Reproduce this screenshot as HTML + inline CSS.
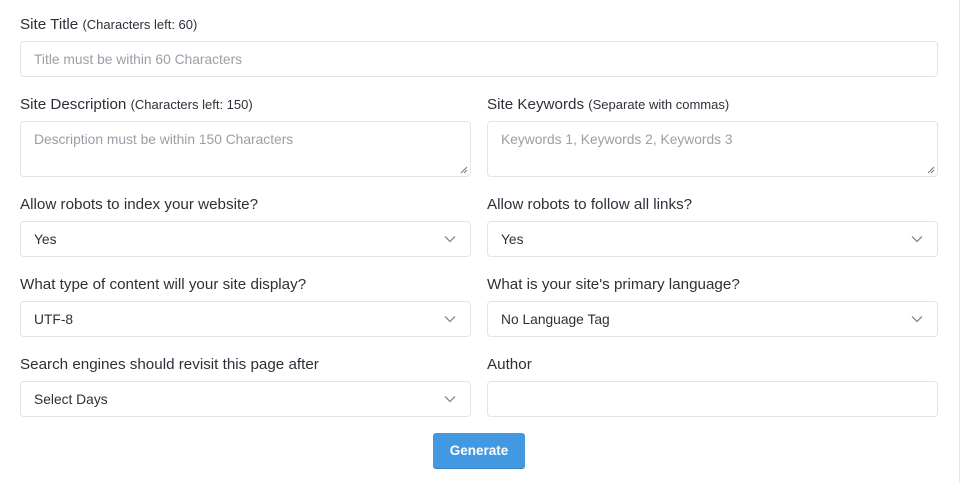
<!DOCTYPE html>
<html><head><meta charset="utf-8"><style>
*{box-sizing:border-box;margin:0;padding:0}
body{width:963px;height:483px;background:#fff;font-family:"Liberation Sans",sans-serif;color:#2d3039;position:relative;overflow:hidden}
.lbl{position:absolute;font-size:15.2px;line-height:16px;margin-top:2px}
.lbl small{font-size:13px}
.box{position:absolute;border:1px solid #e2e4e8;border-radius:4px;background:#fff;font-size:13.8px;color:#2d3039;padding-left:13px;display:flex;align-items:center}
.ph{color:#9a9ea6}
.ta{align-items:flex-start;padding-top:10px}
.arr{position:absolute;right:14px;top:13px;width:12px;height:8px}
.grip{position:absolute;right:2px;bottom:2px;width:8px;height:8px}
.btn{position:absolute;left:433px;top:433px;width:92px;height:35px;background:#4299e1;border-radius:3px;color:#fff;font-size:13.5px;font-weight:bold;display:flex;align-items:center;justify-content:center;box-shadow:0 1px 0 #3a86c8}
.vl{position:absolute;left:959px;top:0;width:1px;height:483px;background:#e6e6e6}
</style></head><body>
<div class="lbl" style="left:20px;top:15px">Site Title <small>(Characters left: 60)</small></div>
<div class="box" style="left:20px;top:41px;width:918px;height:36px"><span class="ph">Title must be within 60 Characters</span></div>

<div class="lbl" style="left:20px;top:95px">Site Description <small>(Characters left: 150)</small></div>
<div class="box ta" style="left:20px;top:121px;width:451px;height:56px"><span class="ph">Description must be within 150 Characters</span><svg class="grip" viewBox="0 0 8 8"><path d="M7 1L1 7M7 4L4 7" stroke="#777" stroke-width="1"/></svg></div>
<div class="lbl" style="left:487px;top:95px">Site Keywords <small>(Separate with commas)</small></div>
<div class="box ta" style="left:487px;top:121px;width:451px;height:56px"><span class="ph">Keywords 1, Keywords 2, Keywords 3</span><svg class="grip" viewBox="0 0 8 8"><path d="M7 1L1 7M7 4L4 7" stroke="#777" stroke-width="1"/></svg></div>

<div class="lbl" style="left:20px;top:195px">Allow robots to index your website?</div>
<div class="box" style="left:20px;top:221px;width:451px;height:36px">Yes<svg class="arr" viewBox="0 0 12 8"><path d="M1 1.5L6 6.5L11 1.5" fill="none" stroke="#888" stroke-width="1.3"/></svg></div>
<div class="lbl" style="left:487px;top:195px">Allow robots to follow all links?</div>
<div class="box" style="left:487px;top:221px;width:451px;height:36px">Yes<svg class="arr" viewBox="0 0 12 8"><path d="M1 1.5L6 6.5L11 1.5" fill="none" stroke="#888" stroke-width="1.3"/></svg></div>

<div class="lbl" style="left:20px;top:275px">What type of content will your site display?</div>
<div class="box" style="left:20px;top:301px;width:451px;height:36px">UTF-8<svg class="arr" viewBox="0 0 12 8"><path d="M1 1.5L6 6.5L11 1.5" fill="none" stroke="#888" stroke-width="1.3"/></svg></div>
<div class="lbl" style="left:487px;top:275px">What is your site's primary language?</div>
<div class="box" style="left:487px;top:301px;width:451px;height:36px">No Language Tag<svg class="arr" viewBox="0 0 12 8"><path d="M1 1.5L6 6.5L11 1.5" fill="none" stroke="#888" stroke-width="1.3"/></svg></div>

<div class="lbl" style="left:20px;top:355px">Search engines should revisit this page after</div>
<div class="box" style="left:20px;top:381px;width:451px;height:36px">Select Days<svg class="arr" viewBox="0 0 12 8"><path d="M1 1.5L6 6.5L11 1.5" fill="none" stroke="#888" stroke-width="1.3"/></svg></div>
<div class="lbl" style="left:487px;top:355px">Author</div>
<div class="box" style="left:487px;top:381px;width:451px;height:36px"></div>

<div class="btn">Generate</div>
<div class="vl"></div>
</body></html>
